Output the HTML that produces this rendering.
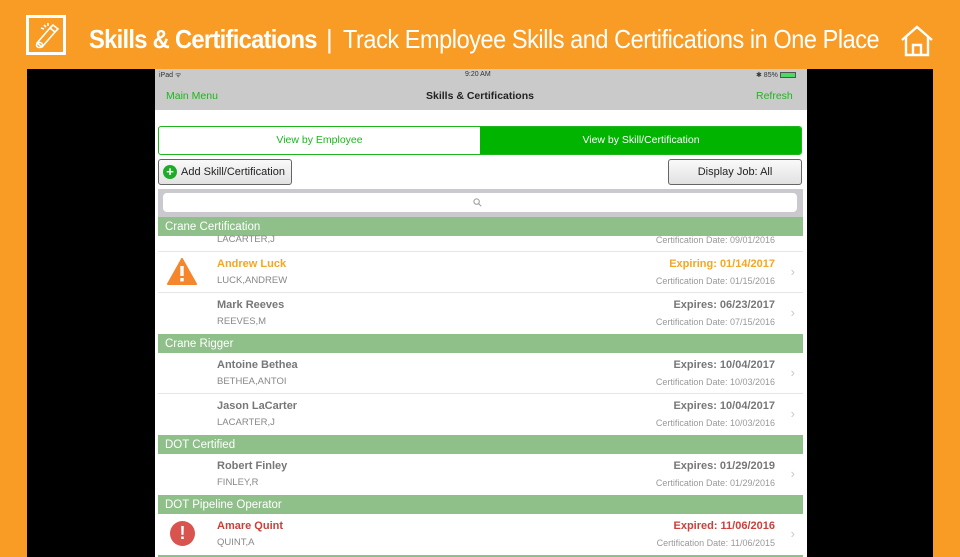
<!DOCTYPE html>
<html><head><meta charset="utf-8"><style>
*{margin:0;padding:0;box-sizing:border-box}
body{width:960px;height:557px;background:#F89C25;position:relative;overflow:hidden;font-family:"Liberation Sans",sans-serif}
.abs{position:absolute}
.t{color:#fff;font-size:26px;top:24px;white-space:nowrap;transform-origin:0 0}
#black{left:27px;top:69px;width:906px;height:488px;background:#000}
#ipad{left:155px;top:69px;width:652px;height:488px;background:#fff;overflow:hidden}
.g{color:#1fb51f}
.hdr{left:3px;width:645px;height:19px;background:#8fc08a;color:#fff;font-size:11.5px;padding:3px 7px;line-height:14px}
.row{left:3px;width:645px;height:41px;border-bottom:1px solid #e6e6e6}
.nm{position:absolute;left:59px;top:6px;font-size:11px;font-weight:bold;color:#777}
.id{position:absolute;left:59px;top:23px;font-size:9.5px;color:#888}
.ex{position:absolute;right:28px;top:6px;font-size:11px;font-weight:bold;color:#777}
.cd{position:absolute;right:28px;top:24px;font-size:9px;color:#999}
.ch{position:absolute;right:8px;top:12px;font-size:13px;color:#c8c8c8}
.btn{top:90px;height:26px;border:1px solid #666;border-radius:3px;background:linear-gradient(#fafafa,#e2e2e2);font-size:11px;color:#222;line-height:24px}
</style></head><body>
<svg class="abs" style="left:26px;top:15px" width="40" height="40" viewBox="0 0 40 40"><rect x="1.5" y="1.5" width="37" height="37" fill="none" stroke="#fff" stroke-width="3"/><g fill="none" stroke="#fff" stroke-width="1.6"><path d="M11 28 L24 13 L29 17 L16 32 Z"/><ellipse cx="13.5" cy="30" rx="3" ry="2.5"/><path d="M24 13 L27 10 L32 14 L29 17"/><path d="M20 12 l-2 -2 M22 11 l0 -3 M18 14 l-3 -1"/></g></svg>
<div class="abs t" style="left:89px;font-weight:bold;letter-spacing:-0.8px;transform:scaleX(0.915)">Skills &amp; Certifications</div>
<div class="abs t" style="left:326px;transform:scaleX(1)">|</div>
<div class="abs t" style="left:343px;letter-spacing:-0.5px;transform:scaleX(0.905)">Track Employee Skills and Certifications in One Place</div>
<svg class="abs" style="left:900px;top:25px" width="34" height="32" viewBox="0 0 34 32"><g fill="none" stroke="#fff" stroke-width="2.4"><path d="M2 15 L17 2 L32 15"/><path d="M6 12 V30 H28 V12"/><path d="M13 30 V20 H21 V30"/></g></svg>
<div class="abs" id="black"></div>
<div class="abs" id="ipad">
 <div class="abs" style="left:0;top:0;width:652px;height:41px;background:#cacaca"></div>
 <div class="abs" style="left:4px;top:2px;font-size:7px;color:#333">iPad ᯤ</div>
 <div class="abs" style="left:310px;top:2px;font-size:7px;color:#333">9:20 AM</div>
 <div class="abs" style="left:601px;top:2px;font-size:7px;color:#333">✱ 85% <span style="display:inline-block;width:16px;height:6px;background:#4cd964;border:1px solid #555;vertical-align:middle"></span></div>
 <div class="abs g" style="left:11px;top:21px;font-size:10.5px">Main Menu</div>
 <div class="abs" style="left:271px;top:21px;font-size:10.5px;font-weight:bold;color:#222">Skills &amp; Certifications</div>
 <div class="abs g" style="left:601px;top:21px;font-size:10.5px">Refresh</div>
 <div class="abs" style="left:3px;top:57px;width:644px;height:29px;border:1px solid #1fb51f;border-radius:3px;overflow:hidden">
  <div class="abs g" style="left:0;top:0;width:321px;height:27px;text-align:center;line-height:27px;font-size:10.5px">View by Employee</div>
  <div class="abs" style="left:321px;top:0;width:322px;height:27px;background:#00b400;color:#fff;text-align:center;line-height:27px;font-size:10.5px">View by Skill/Certification</div>
 </div>
 <div class="abs btn" style="left:3px;width:134px;padding-left:22px"><span style="position:absolute;left:4px;top:5px;width:14px;height:14px;border-radius:50%;background:#1faa2a;color:#fff;font-weight:bold;font-size:13px;line-height:14px;text-align:center">+</span>Add Skill/Certification</div>
 <div class="abs btn" style="left:513px;width:134px;text-align:center">Display Job: All</div>
 <div class="abs" style="left:3px;top:120px;width:645px;height:28px;background:#c9c9ce"></div>
 <div class="abs" style="left:8px;top:124px;width:634px;height:19px;background:#fff;border-radius:4px"></div>
 <svg class="abs" style="left:318px;top:129px" width="9" height="9" viewBox="0 0 9 9"><circle cx="3.6" cy="3.6" r="2.7" fill="none" stroke="#999" stroke-width="1"/><path d="M5.6 5.6 L8.3 8.3" stroke="#999" stroke-width="1"/></svg>
 <div class="abs hdr" style="top:148px">Crane Certification</div>
 <div class="abs row" style="top:167px;height:16px"><div class="id" style="top:-2px">LACARTER,J</div><div class="cd" style="top:-1px">Certification Date: 09/01/2016</div></div>
 <div class="abs row" style="top:183px"><svg class="abs" style="left:9px;top:6px" width="30" height="27" viewBox="0 0 30 27"><path d="M15 1 L29 26 H1 Z" fill="#f5862b" stroke="#f5862b" stroke-linejoin="round" stroke-width="2"/><rect x="13.3" y="8" width="3.4" height="10" fill="#fff"/><rect x="13.3" y="20" width="3.4" height="3.4" fill="#fff"/></svg><div class="nm" style="color:#f5a623">Andrew Luck</div><div class="id">LUCK,ANDREW</div><div class="ex" style="color:#f5a623">Expiring: 01/14/2017</div><div class="cd">Certification Date: 01/15/2016</div><div class="ch">›</div></div>
 <div class="abs row" style="top:224px;border:0"><div class="nm">Mark Reeves</div><div class="id">REEVES,M</div><div class="ex">Expires: 06/23/2017</div><div class="cd">Certification Date: 07/15/2016</div><div class="ch">›</div></div>
 <div class="abs hdr" style="top:265px">Crane Rigger</div>
 <div class="abs row" style="top:284px"><div class="nm">Antoine Bethea</div><div class="id">BETHEA,ANTOI</div><div class="ex">Expires: 10/04/2017</div><div class="cd">Certification Date: 10/03/2016</div><div class="ch">›</div></div>
 <div class="abs row" style="top:325px;border:0"><div class="nm">Jason LaCarter</div><div class="id">LACARTER,J</div><div class="ex">Expires: 10/04/2017</div><div class="cd">Certification Date: 10/03/2016</div><div class="ch">›</div></div>
 <div class="abs hdr" style="top:366px">DOT Certified</div>
 <div class="abs row" style="top:385px;border:0"><div class="nm">Robert Finley</div><div class="id">FINLEY,R</div><div class="ex">Expires: 01/29/2019</div><div class="cd">Certification Date: 01/29/2016</div><div class="ch">›</div></div>
 <div class="abs hdr" style="top:426px">DOT Pipeline Operator</div>
 <div class="abs row" style="top:445px;border:0"><div class="abs" style="left:12px;top:7px;width:25px;height:25px;border-radius:50%;background:#d9534f;color:#fff;font-weight:bold;font-size:18px;text-align:center;line-height:25px">!</div><div class="nm" style="color:#c9403c">Amare Quint</div><div class="id">QUINT,A</div><div class="ex" style="color:#c9403c">Expired: 11/06/2016</div><div class="cd">Certification Date: 11/06/2015</div><div class="ch">›</div></div>
 <div class="abs" style="left:3px;top:486px;width:645px;height:2px;background:#8fc08a"></div>
</div>
</body></html>
